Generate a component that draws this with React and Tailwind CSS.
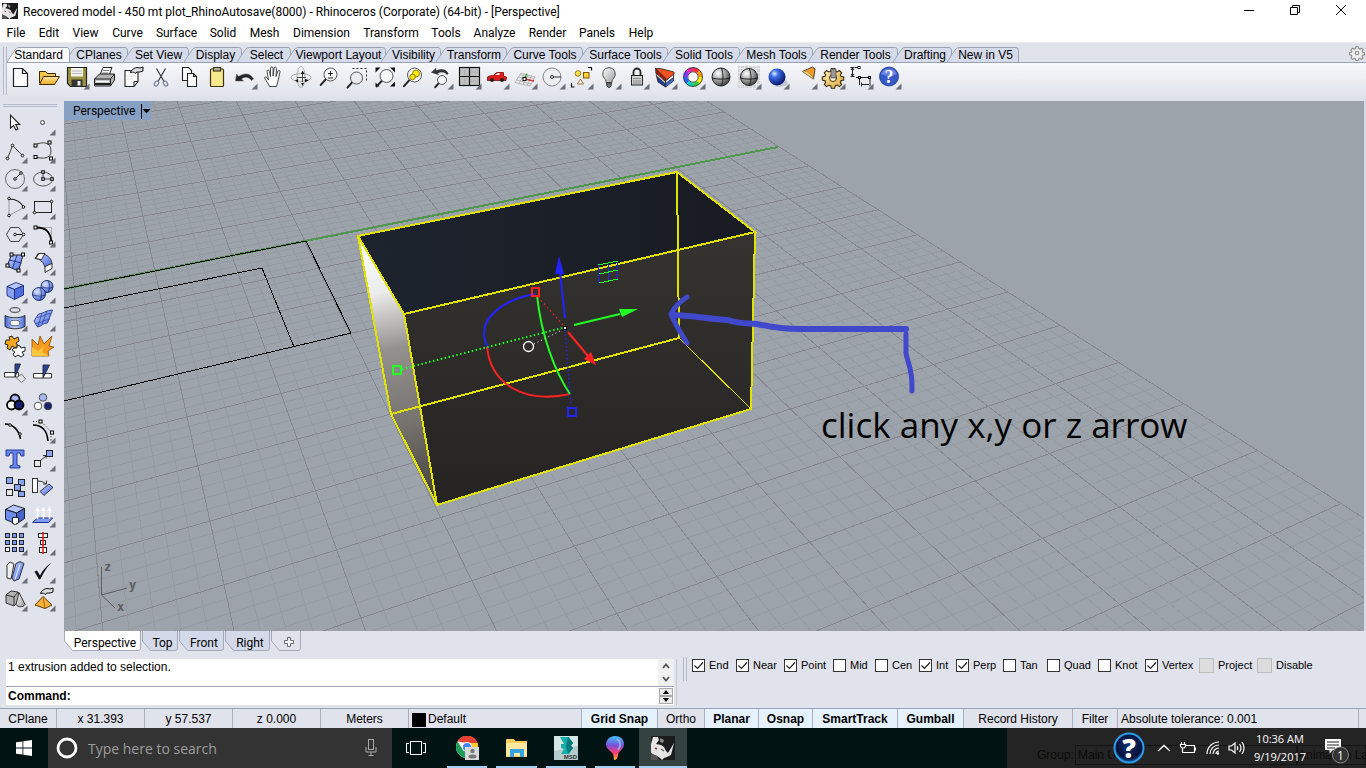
const UI = 'font-[Roboto,"Open_Sans",sans-serif]'
const HUMAN = 'font-["Open_Sans","Noto_Sans",sans-serif]'
const SANS = 'font-["Liberation_Sans",Arial,sans-serif]'

/* ---------- shared paint ---------- */
function Paints() {
  return (
    <svg className="absolute h-0 w-0" aria-hidden="true">
      <defs>
        <linearGradient id="folder" x1="0" y1="0" x2="0" y2="1"><stop offset="0" stopColor="#ffe9a0" /><stop offset="1" stopColor="#f0a81c" /></linearGradient>
        <linearGradient id="steel" x1="0" y1="0" x2="1" y2="1"><stop offset="0" stopColor="#fff" /><stop offset="1" stopColor="#9a9a9a" /></linearGradient>
        <linearGradient id="blue" x1="0" y1="0" x2="1" y2="1"><stop offset="0" stopColor="#c3d2ff" /><stop offset="1" stopColor="#4a6ae0" /></linearGradient>
        <linearGradient id="blueX" x1="0" y1="0" x2="1" y2="0"><stop offset="0" stopColor="#3e63d8" /><stop offset=".5" stopColor="#cfdcff" /><stop offset="1" stopColor="#3e63d8" /></linearGradient>
        <radialGradient id="ball" cx=".35" cy=".3" r=".75"><stop offset="0" stopColor="#fff" /><stop offset=".5" stopColor="#a5a5a5" /><stop offset="1" stopColor="#3c3c3c" /></radialGradient>
        <radialGradient id="blueBall" cx=".35" cy=".3" r=".75"><stop offset="0" stopColor="#dfe9ff" /><stop offset=".3" stopColor="#3b6be8" /><stop offset="1" stopColor="#04105f" /></radialGradient>
        <radialGradient id="softBall" cx=".35" cy=".3" r=".75"><stop offset="0" stopColor="#dce6ff" /><stop offset="1" stopColor="#4467d8" /></radialGradient>
        <linearGradient id="gold" x1="0" y1="0" x2="1" y2="1"><stop offset="0" stopColor="#fff0c0" /><stop offset="1" stopColor="#d9a63a" /></linearGradient>
        <linearGradient id="boxTop" x1="0" y1="0" x2="1" y2="0"><stop offset="0" stopColor="#1e242e" /><stop offset="1" stopColor="#181b22" /></linearGradient>
        <linearGradient id="boxFront" x1="0" y1="0" x2="0" y2="1"><stop offset="0" stopColor="#353330" /><stop offset="1" stopColor="#262422" /></linearGradient>
        <linearGradient id="boxSide" gradientUnits="userSpaceOnUse" x1="372" y1="240" x2="420" y2="500"><stop offset="0" stopColor="#fff" /><stop offset=".2" stopColor="#ececec" /><stop offset=".42" stopColor="#93918e" /><stop offset=".7" stopColor="#77736f" /><stop offset="1" stopColor="#45413d" /></linearGradient>
        <radialGradient id="helpOrb" cx=".5" cy=".4" r=".6"><stop offset="0" stopColor="#12346e" /><stop offset=".75" stopColor="#06103a" /><stop offset="1" stopColor="#1567b0" /></radialGradient>
        <linearGradient id="drop" x1="0" y1="0" x2="0" y2="1"><stop offset="0" stopColor="#3fc0ff" /><stop offset=".4" stopColor="#7b4fd6" /><stop offset=".7" stopColor="#ff3d6e" /><stop offset="1" stopColor="#ffb52e" /></linearGradient>
      </defs>
    </svg>
  )
}

const Dots = ({ pts, s = 3 }) => pts.map(([x, y], i) => (
  <rect key={i} x={x - s / 2} y={y - s / 2} width={s} height={s} fill="#fff" stroke="#000" strokeWidth="1" />
))
const Rounds = ({ pts }) => pts.map(([x, y], i) => <circle key={i} cx={x} cy={y} r="1.3" fill="#fff" stroke="#000" strokeWidth=".9" />)
const GEAR = 'M12.3 5.5h3.4l.5 2.6 1.9.8 2.3-1.4 2.3 2.3-1.4 2.2.8 1.4 2.6.5v3.2l-2.6.5-.8 1.6 1.4 2.2-2.3 2.2-2.3-1.5-1.9.8-.5 2.4h-3.4l-.5-2.4-1.9-.8-2.3 1.5-2.3-2.2 1.4-2.2-.8-1.6-2.6-.5v-3.2l2.6-.5.8-1.4-1.4-2.2 2.3-2.3 2.3 1.4 1.9-.8z'
const Lens = ({ x = 16, y = 12, r = 6, fill = '#f4f6f8' }) => (
  <g><path d={`M${x - r * 0.7} ${y + r * 0.7}L${x - r * 1.5} ${y + r * 1.6}`} stroke="#222" strokeWidth="2" strokeLinecap="round" /><circle cx={x} cy={y} r={r} fill={fill} stroke="#555" strokeWidth="1" /></g>
)
const Grip = ({ x, y }) => <path d={`M${x} ${y}c2-2 4-3.500 6-3.500l3 .5 3-1v4l-3 1-3 0-2 1.500-1.500-1.500-3 .5z`} fill="#ddd" stroke="#111" strokeWidth="1" strokeLinejoin="round" />

const TOOLS = [
  ['New', false, <path d="M6.500 5.500h9l5 5v13h-14zM15.500 5.500v5h5" fill="#fcfcfc" stroke="#222" strokeWidth="1.2" />],
  ['Open', false, <g stroke="#3a2a00" strokeLinejoin="round"><path d="M4.500 20V8.500h6l2 2h8v3" fill="#f6c64a" /><path d="M4.500 21.500l4-8h16l-5 8z" fill="url(#folder)" /></g>],
  ['Save', true, <g><path d="M4.500 4.500h19v19h-16l-3-3z" fill="#9c9340" stroke="#222" strokeWidth="1.200" /><rect x="8" y="5" width="12" height="8.500" fill="#f3f3ef" /><path d="M9 8h10M9 10.500h10" stroke="#b9b9b9" /><rect x="8.500" y="16.500" width="11" height="7" fill="#333" /><rect x="14.500" y="18" width="3" height="4.500" fill="#eee" /></g>],
  ['Print', false, <g stroke="#222" strokeLinejoin="round"><path d="M9 12l3-7.500h9l-3 8z" fill="#fff" /><path d="M12 7.500h6M11 10h6" stroke="#777" /><path d="M3.500 16l5-5h15v6l-4 6h-16z" fill="#b5b5b5" /><path d="M3.500 16h16v7M19.500 16l4-5" fill="none" /><path d="M5 18.500h13" stroke="#fff" strokeWidth="1.500" /><path d="M4 21h15" strokeWidth="2" /></g>],
  ['Document properties', false, <g><path d="M6 7.500h13v11l-4 5H6z" fill="#fcfcfc" stroke="#222" strokeWidth="1.100" /><path d="M15 23v-4.500h4" fill="none" stroke="#222" /><path d="M8 13h8M8 16h6" stroke="#ddd" /><Grip x={12} y={8} /></g>],
  ['Cut', false, <g fill="none"><path d="M9.500 5.500l7.500 13M18.500 5.500l-7.500 13" stroke="#3a3a3a" strokeWidth="1.200" /><ellipse cx="9.500" cy="20.500" rx="1.800" ry="2.800" transform="rotate(35 9.500 20.500)" stroke="#7b829c" strokeWidth="1.200" /><ellipse cx="18.500" cy="20.500" rx="1.800" ry="2.800" transform="rotate(-35 18.500 20.500)" stroke="#7b829c" strokeWidth="1.200" /></g>],
  ['Copy', false, <g fill="#fcfcfc" stroke="#222" strokeWidth="1.100"><path d="M7.500 4.500h6l3 3v10h-9z" /><path d="M12.500 10.500h6l3 3v10h-9zM18.500 10.500v3h3" /></g>],
  ['Paste', false, <g stroke="#3d3413" strokeWidth="1.200"><rect x="7.500" y="6" width="13" height="17.500" rx="1" fill="#f7e88e" /><rect x="10.500" y="4.500" width="7" height="3.500" fill="#b8b8a0" /></g>],
  ['Undo', true, <path d="M4.500 18l1-7 2 2.500c6-4 12-3.500 15 2.500l-2 1.500c-3-4-7-4-10-1.500l2 2z" fill="#222" stroke="#666" strokeWidth=".5" />],
  ['Pan', false, <path d="M10.500 23.500c-1-3-4-6-5-9 1-1.500 2.500 0 4 2.500l-1.500-9c.5-1.500 2-1.500 2.500.500l1 5V5c.500-1.500 2.300-1.500 2.600 0v8l1-8c.500-1.500 2.400-1 2.400.500l-.5 8 2-5.500c1-1.200 2.300-.500 2 1l-2 9-1.500 5.500z" fill="#fff" stroke="#333" strokeWidth=".9" />],
  ['Rotate view', false, <g fill="none"><ellipse cx="14" cy="14.500" rx="10" ry="4" stroke="#aaa" /><ellipse cx="14" cy="14" rx="4" ry="10.500" stroke="#aaa" /><path d="M15.500 10v9M10 14.500h9" stroke="#444" /><path d="M11 16l-3 1.500 3 2zM18 16l4 1-4 2.500zM14 11l1.500-3.500 2 3.500zM14 20l1.500 3 1.500-3z" fill="#111" /></g>],
  ['Zoom dynamic', false, <g><Lens x={15.500} y={11.500} r={6.500} /><path d="M13 10.500h5M15.500 8v5M13 15h5" stroke="#222" /></g>],
  ['Zoom window', false, <g><Lens x={13.500} y={15} r={6} fill="#e9ebf0" /><path d="M9.500 5.500h14v14" fill="none" stroke="#222" strokeDasharray="2 2" /></g>],
  ['Zoom extents', false, <g><path d="M4.500 4.500h5l-5 5zM24 4.500v5l-5-5zM24 23.500h-5l5-5zM4.500 23.500v-4l4 4z" fill="#111" /><Lens x={15.500} y={13} r={6.500} /></g>],
  ['Zoom selected', false, <g><Lens x={15.500} y={12} r={7} /><circle cx="17" cy="10.500" r="3.500" fill="#ffe600" stroke="#776600" strokeWidth=".8" /><circle cx="13.500" cy="14" r="2.800" fill="#ffe600" stroke="#776600" strokeWidth=".8" /></g>],
  ['Undo view change', true, <g><path d="M4 9.500l5-4.500 .5 2.500c5-2.500 10-1 12 3l-1.500 1.500c-2-3-5-3.500-9-2l1 2z" fill="#333" /><Lens x={15} y={17} r={4.500} /></g>],
  ['Four viewports', true, <g><rect x="4.500" y="4.500" width="20" height="18" fill="#c0c0c0" stroke="#111" strokeWidth="1.200" /><path d="M14.500 5v17M5 13.500h19" stroke="#111" strokeWidth="1.200" /><path d="M9.500 5v8M15 9h9M9.500 14v8M15 18h9" stroke="#b0b0b0" /></g>],
  ['Named views', true, <g><path d="M4.500 14c2-1.500 5-1.500 6-1.500l3-3h7v3.500l3 1-.5 3.500h-18.500z" fill="#e21b1b" stroke="#7a0a0a" strokeWidth=".8" /><path d="M12.500 12l2-2h2v2z" fill="#eee" /><circle cx="9" cy="17" r="2" fill="#222" /><circle cx="19" cy="17" r="2" fill="#222" /></g>],
  ['Set CPlane', true, <g fill="none" stroke="#aaa" strokeWidth=".8"><path d="M4 19.500l6-9.500 14 4-5 9zM5.500 17l14.500 4M7.500 14l14 4M9 11.500l14 4M8 20.500l5.500-9.500M12 21.500l5-9.500M16 22.500l4.500-10" /><path d="M14 16l9 2" stroke="#d33" strokeWidth="1.500" /><path d="M14 14.500l2-4" stroke="#3a3" strokeWidth="1.200" /><rect x="12" y="14.500" width="3" height="3" fill="#fff" stroke="#000" strokeWidth="1" /></g>],
  ['Object snap', true, <g fill="none" stroke="#888"><circle cx="13" cy="14" r="9" fill="#eceef2" /><path d="M13 14h9" stroke="#333" /><circle cx="13" cy="14" r="1.500" fill="#fff" stroke="#222" /></g>],
  ['Select objects', true, <g><path d="M4.500 20v4h3M21 4.500h3.500v3" fill="none" stroke="#111" strokeWidth="1.200" /><circle cx="11" cy="10.500" r="2.800" fill="#ffe14d" stroke="#9a7200" strokeWidth=".9" /><rect x="16.500" y="9.500" width="5.500" height="5.500" fill="#ffd23a" stroke="#7a5a00" /><path d="M10.500 21l3-5 3 5z" fill="#fff" stroke="#a0622d" strokeWidth=".9" /></g>],
  ['Hide objects', true, <g><path d="M14 4.500a6.500 6.500 0 0 1 4.500 11c-1 1-1.500 2-1.500 4h-6c0-2-.5-3-1.500-4a6.500 6.500 0 0 1 4.500-11z" fill="url(#steel)" stroke="#555" /><path d="M11.500 20h5l-.500 3-1.500 1.500h-1l-1.500-1.500z" fill="#777" stroke="#333" /></g>],
  ['Lock objects', true, <g stroke="#222"><path d="M10.500 13V9a3.500 3.500 0 0 1 7 0v4" fill="none" strokeWidth="1.800" /><rect x="8.500" y="12.500" width="11" height="9.500" fill="#d2d2d2" /><path d="M10 15.500h8M10 18h8M10 20h8" stroke="#888" /></g>],
  ['Layers', true, <g stroke="#222" strokeWidth=".8" strokeLinejoin="round"><path d="M5.500 13l9 7.500v3.500l-7.500-5z" fill="#1d3f9e" /><path d="M14.500 20.500l8-6v3.500l-8 6z" fill="#3c70e0" /><path d="M5 9.500l9.500 8.500v3L5.500 13z" fill="#ddd" /><path d="M14.500 18l8-7v3.500l-8 6z" fill="#fff" /><path d="M4.500 5.500l10 9.500v3.500L5 10z" fill="#b51a08" /><path d="M4.500 5.500h5l13.500 3.500v2l-8.500 6.500V15z" fill="#f5521f" /></g>],
  ['Object properties', true, <g fill="none" strokeWidth="4">{['#f33', '#f90', '#fe0', '#3c3', '#0cc', '#26f', '#83f', '#e2a'].map((c, i) => <path key={c} d="M14 6.500a7.500 7.500 0 0 1 5.500 2.300" stroke={c} transform={`rotate(${i * 45} 14 14)`} />)}<circle cx="14" cy="14" r="9.500" stroke="#333" strokeWidth=".9" /><circle cx="14" cy="14" r="5.200" fill="#fff" stroke="#444" strokeWidth=".9" /></g>],
  ['Shaded viewport', false, <g><circle cx="14" cy="14" r="9" fill="url(#ball)" stroke="#222" /><path d="M5 15c5 1.500 13 1.500 18 0M14.500 5c2 6 2 12 0 18" fill="none" stroke="#222" /></g>],
  ['Render preview', true, <g><rect x="3" y="3" width="22" height="22" fill="#d2d3d6" /><path d="M3 5.500h22M3 9.500h22M3 13.500h22M3 17.500h22M3 21.500h22M5.500 3v22M9.500 3v22M13.500 3v22M17.500 3v22M21.500 3v22" stroke="#eee" strokeWidth=".8" /><circle cx="14" cy="14" r="8.500" fill="url(#ball)" stroke="#222" /><path d="M5.500 15c5 1.500 12 1.500 17 0M14.500 6c2 6 2 11 0 16.500" fill="none" stroke="#222" /></g>],
  ['Render', true, <g><ellipse cx="17" cy="20" rx="8" ry="4" fill="#c3c7cf" /><circle cx="14" cy="14" r="8.500" fill="url(#blueBall)" /></g>],
  ['Spotlight', true, <g><path d="M11.500 8.500l10-4.500 2.500 2-1.500 10z" fill="#f59b23" stroke="#333" strokeWidth=".9" /><path d="M11.500 8.500c3-1 5 0 7 2s3.500 3.500 4 5.500z" fill="#ffd27a" stroke="#884" strokeWidth=".7" /></g>],
  ['Options', true, <g><path d={GEAR} fill="url(#gold)" stroke="#3d2c05" strokeWidth="1.100" /><circle cx="14" cy="15" r="3.500" fill="#fff6d8" stroke="#3d2c05" /><path d="M12 6h5v9h-5z" fill="#999" stroke="#444" strokeWidth=".7" /></g>],
  ['Dimensions', true, <g fill="none" stroke="#222"><path d="M5.500 5v8M3.500 4.500h4M3.500 13.500h4M8 4.500h3M9 14.500h14v5M12.500 16v6M15 21.500h7M14.500 19.500v4M23 19.500v4M5.500 5l-1.500 2M5.500 5l1.500 2M5.500 13l-1.500-2M5.500 13l1.500-2" /><Dots pts={[[12, 4.500], [12.500, 14.500], [22.500, 14.500]]} s={2} /></g>],
  ['Help', true, <g><circle cx="14" cy="13.500" r="9.500" fill="#3558c8" stroke="#1c3490" strokeWidth=".8" /><path d="M6 11a8.500 8 0 0 1 16 0c-5 2.500-11 2.500-16 0z" fill="#7d98ea" opacity=".7" /><text x="14" y="20" textAnchor="middle" fontFamily="Liberation Serif" fontWeight="700" fontSize="18" fill="#fff">?</text></g>],
]

const Curve = ({ d }) => <path d={d} fill="none" stroke="#444" strokeWidth="1" />
const SIDE = [
  ['Select', 0, <path d="M9.500 6v13l3-2.500 2.500 4.500 2-1-2.300-4.500h4z" fill="#fff" stroke="#222" strokeWidth="1.100" />],
  ['Point', 1, <circle cx="13.500" cy="13.500" r="2" fill="#fff" stroke="#444" />],
  ['Polyline', 1, <g><Curve d="M6.500 21.500l5-13 10 10" /><Rounds pts={[[6.500, 21.500], [11.500, 8.500], [21.500, 18.500]]} /></g>],
  ['Curve', 1, <g><Curve d="M6 8c8-4 16-3 16 6 0 8-8 8-16 6" /><Dots pts={[[6.500, 8.500], [20.500, 5.500], [22, 21.500], [6.500, 20]]} /></g>],
  ['Circle', 1, <g><circle cx="14" cy="14" r="9.500" fill="none" stroke="#666" /><path d="M14 14l6-6" stroke="#222" /><Rounds pts={[[14, 14], [20, 8]]} /></g>],
  ['Ellipse', 1, <g><ellipse cx="14" cy="14" rx="9.500" ry="7" fill="none" stroke="#555" /><path d="M14 7v7h9" fill="none" stroke="#222" strokeWidth=".8" /><Dots pts={[[14, 7], [14, 14], [23, 14]]} s={2.5} /></g>],
  ['Arc', 1, <g><path d="M8 5.500v17l15-8" fill="none" stroke="#999" /><path d="M8 6c7 0 12 3 15 8.500" fill="none" stroke="#111" strokeWidth="1.100" /><Rounds pts={[[8, 5.500], [8, 22.500], [22.500, 14]]} /></g>],
  ['Rectangle', 1, <g><rect x="5.500" y="8.500" width="17" height="11" fill="none" stroke="#222" /><Rounds pts={[[5.500, 19.500], [22.500, 8.500]]} /></g>],
  ['Polygon', 1, <g><path d="M9.500 6.500h8.500l4.500 7-4.500 7h-8.500L5.500 13.500z" fill="none" stroke="#444" /><path d="M14 13.500h8" stroke="#000" /><Rounds pts={[[14, 13.500], [22.500, 13.500]]} /></g>],
  ['Fillet', 1, <g><path d="M7 6.500h15.500v14" fill="none" stroke="#999" strokeWidth=".8" /><path d="M7 6.500c10 0 14.500 4 15.500 15" fill="none" stroke="#000" strokeWidth="1.800" /><Dots pts={[[6.500, 6.500], [22, 21.500]]} /></g>],
  ['Surface from points', 1, <g><path d="M10.500 6h11.500l-4.500 16-11.500-5z" fill="url(#blue)" stroke="#222" /><path d="M8.500 11l12 3M16 6l-4.500 13.500" stroke="#223a90" /><Dots pts={[[10.500, 5.500], [22, 5.500], [17.500, 21.500], [6.500, 16.500]]} /></g>],
  ['Loft', 1, <g stroke="#222" strokeWidth=".9"><path d="M9 4.500c7-1 14 4 14 11l-7 3c-1-5-5-9-10-9z" fill="url(#blue)" /><path d="M6.500 9.500l3.500-5h6l-3.500 6z" fill="#fff" /><path d="M16 17.500l7-3v5l-7 4z" fill="#fff" /></g>],
  ['Box', 1, <g stroke="#1b2b78" strokeWidth=".9" strokeLinejoin="round"><path d="M6 9.500l9-4 7.500 3-9 4z" fill="#b7c7ff" /><path d="M6 9.500l7.500 3v10l-7.500-4z" fill="#88a2f5" /><path d="M13.500 12.500l9-4v9.500l-9 4.500z" fill="#4a6cdc" /></g>],
  ['Spheres', 1, <g stroke="#15225e" strokeWidth=".9"><circle cx="18" cy="9.500" r="6" fill="url(#softBall)" /><circle cx="10" cy="17" r="6.500" fill="url(#softBall)" /><path d="M4 18c4 1.500 9 1.500 12 0M11 11c2 4 2 8 0 12M13 10c4 1.500 8 1.500 11 0M19 3.500c2 4 2 8 0 12" fill="none" strokeWidth=".7" /></g>],
  ['Surface tools', 1, <g stroke="#222" strokeWidth=".9"><ellipse cx="14" cy="5" rx="5" ry="2.300" fill="none" /><path d="M4 10.500c5 3 15 3 20 0v11c-5 3-15 3-20 0z" fill="url(#blueX)" /><ellipse cx="14" cy="18" rx="5" ry="2.800" fill="#fff" stroke="#456" /></g>],
  ['Mesh', 1, <g stroke="#223a90" strokeWidth=".9"><path d="M5 16l4.500-7c4 0 8-4 14-4l-5 13c-5 0-5 3-10 4z" fill="url(#blue)" /><path d="M6.500 18.500c5 0 8-4 14-4M8 12.500c5 0 8-4 14-4M13 8l-4 13M18 6l-5 13" fill="none" strokeWidth=".7" /></g>],
  ['Explode', 0, <g stroke="#222" strokeLinejoin="round"><path d="M5 7l4 0-1-3 3-1 2 3 4-2 1 4-3 2 2 3-3 2-3-2-2 4-3-2 1-3-3-1z" fill="#f5a623" /><path d="M13 15l3 0 0-3 3 1 1 2 4-1 0 4-3 1 2 3-3 2-3-2-3 2-2-3 2-2-3-2z" fill="#fff" /></g>],
  ['Blast', 0, <g><path d="M3 6l6 6 2-9 4 8 8-8-3 10 5 1-6 4 1 5H3z" fill="#f59a1c" stroke="#8a4b00" strokeWidth=".8" /><path d="M3 23v-9l6 4 6-5-2 6 7 4z" fill="#ffc53d" /></g>],
  ['Trim', 0, <g stroke="#222" strokeWidth=".9"><path d="M3.500 11.500h14v4.500h-14z" fill="#fff" /><path d="M14 3h5.500l-5.500 13z" fill="#24469c" /><path d="M15.500 17l5-4 4 5-4 3.500z" fill="#e4e4e4" stroke="#666" /></g>],
  ['Split', 0, <g stroke="#222" strokeWidth=".9"><path d="M4.500 12.500h18v4.500h-18z" fill="#fff" /><path d="M14 4h6.500l-6.500 13z" fill="#24469c" /></g>],
  ['Join', 1, <g stroke="#000" strokeWidth="1.800"><circle cx="14" cy="10" r="4.500" fill="#a9b6f2" /><circle cx="10.500" cy="16" r="4.500" fill="#fff" /><circle cx="18" cy="16" r="4.500" fill="#14206e" /></g>],
  ['Group', 0, <g stroke="#444" strokeWidth=".9"><circle cx="14" cy="8.500" r="3.800" fill="#a9b6f2" /><circle cx="9" cy="17" r="3.800" fill="#fff" /><circle cx="19" cy="17" r="3.800" fill="#14206e" /></g>],
  ['Edit points', 0, <g><path d="M4 7c8 0 14 6 15.500 15" fill="none" stroke="#000" strokeWidth="1.600" /><Rounds pts={[[9, 8], [19, 17]]} /></g>],
  ['Control points', 1, <g><path d="M4 8c9 0 14 5 15 16" fill="none" stroke="#000" strokeWidth="1.600" /><path d="M4 4.500h8l10 10v10" fill="none" stroke="#000" strokeDasharray="1 2" /><Dots pts={[[11.500, 4.500], [23, 15.500]]} /></g>],
  ['Text', 0, <path d="M5 5h18v6h-3l-1-3h-3v12l3 1v2H9v-2l3-1V8H9l-1 3H5z" fill="#6685ee" stroke="#1c2f8a" strokeWidth=".9" />],
  ['Move', 1, <g stroke="#222"><rect x="5.500" y="15.500" width="6" height="6" fill="#e8e8e8" /><rect x="17.500" y="5.500" width="6" height="6" fill="#8aa2f2" /><path d="M12 15l5-4M14 10.500h3v3" fill="none" strokeWidth=".9" /></g>],
  ['Copy objects', 0, <g stroke="#222"><rect x="5.500" y="4.500" width="6" height="6" fill="#8aa2f2" /><rect x="17.500" y="6.500" width="6" height="6" fill="#8aa2f2" /><rect x="13.500" y="11.500" width="6" height="6" fill="#8aa2f2" /><rect x="5.500" y="16.500" width="6" height="6" fill="#e8e8e8" /><rect x="17.500" y="18.500" width="6" height="5" fill="#8aa2f2" /></g>],
  ['Rotate', 0, <g stroke="#222" strokeWidth=".9"><rect x="3.500" y="5.500" width="5" height="14" fill="#fff" /><path d="M11 18.500l9-7.500 4 3.500-9 8z" fill="url(#blue)" /><path d="M9 8c3 0 6 1 8 3M17.500 7.500v3.500h-3.500" fill="none" /></g>],
  ['Boolean', 1, <g stroke="#111" strokeWidth=".9" strokeLinejoin="round"><path d="M4.500 8.500l8-4.500 11 3.500-8 4.500z" fill="#b7c7ff" /><path d="M4.500 8.500l11 3.500v11l-11-4.500z" fill="#6e8cee" /><path d="M15.500 12l8-4.500v10l-8 5.500z" fill="#4463d0" /><path d="M11.500 16.500h6v5l-3 2-3-1z" fill="#fff" /></g>],
  ['Extrude', 1, <g><path d="M3.500 21.500l5-4.500h15l-4 4.500z" fill="#7f9af2" stroke="#1c2f8a" /><path d="M8.500 18V8M14.500 18V8M20.500 18V8" stroke="#fff" strokeWidth="1.600" /><path d="M6 10l2.500-4 2.500 4zM12 10l2.500-4 2.500 4zM18 10l2.500-4 2.500 4z" fill="#fff" /></g>],
  ['Array', 1, <g stroke="#222">{[4.500, 11.500, 18.500].map((x) => [4.500, 11.500, 18.500].map((y) => <rect key={x + '-' + y} x={x} y={y} width="4" height="4" fill={x === 4.500 && y === 18.500 ? '#fff' : '#7f9af2'} />))}</g>],
  ['Align', 1, <g stroke="#222"><rect x="9.500" y="4.500" width="9" height="4" fill="#fff" /><rect x="11.500" y="11.500" width="5" height="4" fill="#fff" /><rect x="10.500" y="18.500" width="7" height="5" fill="#fff" /><path d="M14 3v22" stroke="#e02020" strokeWidth="1.600" /></g>],
  ['Twist', 1, <g stroke="#222" strokeWidth=".9" strokeLinejoin="round"><path d="M6 8l3-3 4 2-3 15-4-1z" fill="#eee" /><path d="M15 6.500l4-2 4 2-5 15.500-5 2-2-3z" fill="url(#blue)" /><path d="M19 7.500l-5 15" stroke="#fff" /></g>],
  ['Check', 1, <path d="M5.500 14.500l2.500-1 3 5c3-6 7-10 11.500-13-5 5-8 10-11 16.500l-1.500 .5z" fill="#111" />],
  ['Solids', 1, <g stroke="#222" strokeWidth=".9" strokeLinejoin="round"><path d="M5 10l5-4 7 1 2 8-6 6-8-3z" fill="#b2b2b2" /><path d="M5 10l8 2v9M13 12l4-5" fill="none" /><path d="M18 7.500l6 12c-2 3-7 3-9 0z" fill="url(#steel)" /></g>],
  ['Display tools', 1, <g strokeLinejoin="round"><path d="M6 20l8-8.500 9 8.500-7 3.500z" fill="#f5b040" stroke="#5c3c00" /><path d="M14 11.500l2 12" stroke="#a86a00" /><Grip x={12} y={7} /></g>],
]

function ToolCell({ label, menu, children }) {
  return (
    <button type="button" aria-label={label} title={label} className="block h-7 w-7 shrink-0">
      <svg viewBox="0 0 28 28" className="h-7 w-7" fill="none">
        {children}
        {menu ? <path d="M26.500 20.500v6h-6z" fill="#6b6f76" /> : null}
      </svg>
    </button>
  )
}

/* ---------- title, menus, toolbar ---------- */
function RhinoMark({ className }) {
  return (
    <svg viewBox="0 0 24 24" className={className}>
      <rect width="24" height="24" fill="#1b1b1b" />
      <path d="M2 1h5l1 3-3 4 5 1 3 2 2 4 2 2 6-10-3 12-4 2-3 1-2 2-2-2-3-2-5-2-3-5 2-5z" fill="#e4e4e4" />
      <path d="M9 2l4 2-1 3-3-1z" fill="#888" />
      <path d="M0 17l6 3 2 4H0z" fill="#555" />
      <path d="M4 12l2 1" stroke="#a33" strokeWidth="1.500" />
      <path d="M10 13l3 2" stroke="#555" strokeWidth="1.200" />
    </svg>
  )
}

function TitleBar() {
  return (
    <header className={`flex h-[22px] items-center bg-white text-black ${UI}`}>
      <RhinoMark className="ml-0.5 h-4 w-4" />
      <h1 className="ml-[5px] grow pt-0.5 text-[12px]">Recovered model - 450 mt plot_RhinoAutosave(8000) - Rhinoceros (Corporate) (64-bit) - [Perspective]</h1>
      <div className="mr-0.5 flex">
        {[['Minimize', 'M1 6.500h10'], ['Restore', 'M3.500 3.500v-2h7v7h-2M1.500 3.500h7v7h-7z'], ['Close', 'M1 1l10 10M11 1L1 11']].map(([l, d]) => (
          <button key={l} type="button" aria-label={l} className="flex w-[46px] justify-center pb-0.5">
            <svg viewBox="0 0 12 12" className="h-3 w-3"><path d={d} fill="none" stroke="#000" /></svg>
          </button>
        ))}
      </div>
    </header>
  )
}

const MENUS = [['File', 'w-8'], ['Edit', 'w-[34px]'], ['View', 'w-[39px]'], ['Curve', 'w-[45px]'], ['Surface', 'w-[53px]'], ['Solid', 'w-10'], ['Mesh', 'w-[43px]'], ['Dimension', 'w-[71px]'], ['Transform', 'w-[68px]'], ['Tools', 'w-[42px]'], ['Analyze', 'w-[55px]'], ['Render', 'w-[51px]'], ['Panels', 'w-12'], ['Help', 'w-10']]

function MenuBar() {
  return (
    <nav className={`flex h-[21px] items-center border-b border-[#ececec] bg-white pt-0.5 text-[12px] text-black ${UI}`}>
      {MENUS.map(([m, w]) => <button key={m} type="button" className={`${w} shrink-0 text-center whitespace-nowrap`}>{m}</button>)}
    </nav>
  )
}

const TABS = [['Standard', 63], ['CPlanes', 58], ['Set View', 61], ['Display', 53], ['Select', 49], ['Viewport Layout', 95], ['Visibility', 55], ['Transform', 66], ['Curve Tools', 76], ['Surface Tools', 85], ['Solid Tools', 72], ['Mesh Tools', 73], ['Render Tools', 85], ['Drafting', 54], ['New in V5', 67]]

function ToolbarTab({ name, width, active }) {
  const x0 = active ? 5 : 0
  return (
    <button type="button" style={{ width }} className={`relative h-[15px] shrink-0 text-[12px] leading-4 whitespace-nowrap text-black ${active ? 'z-10' : ''}`}>
      <svg width={width + 6} height="15" className="absolute top-0 -left-[5px]">
        <path d={`M${x0} 15L${x0 + 8} 3q1.500-2.500 4-2.500H${width + 2}q2.500 0 2.500 3V15`} fill={active ? '#fbfbfd' : '#d6dbea'} stroke="#9aa3b5" />
      </svg>
      <span className="relative">{name}</span>
    </button>
  )
}

function Toolbar() {
  return (
    <section className={`flex bg-[#e0e3eb] pt-1 ${SANS}`}>
      <div className="ml-[3px] h-12 w-1 shrink-0 border-x border-[#b4bccb]" />
      <div className="min-w-0 grow">
        <div className="flex">
          {TABS.map(([n, w], i) => <ToolbarTab key={n} name={n} width={w} active={i === 0} />)}
          <button type="button" aria-label="Toolbar options" className="-mt-0.5 mr-px ml-auto h-4 w-4">
            <svg viewBox="3 3 22 23" className="h-4 w-4"><path d={GEAR} fill="#eee" stroke="#888" strokeWidth="1.500" /><circle cx="14" cy="14.500" r="2.500" fill="none" stroke="#888" strokeWidth="1.500" /></svg>
          </button>
        </div>
        <div className="flex h-[39px] border-t border-[#9aa3b5] bg-linear-to-b from-[#f7f8fb] to-[#dde0e8]">
          {TOOLS.map(([l, m, g]) => <ToolCell key={l} label={l} menu={m}>{g}</ToolCell>)}
        </div>
      </div>
    </section>
  )
}

function Sidebar() {
  return (
    <aside className="w-16 shrink-0 bg-[#e0e3eb] px-[3px] pt-[3px]">
      <div className="mr-1 mb-0.5 h-[3px] border-y border-[#b4bccb]" />
      <div className="-ml-0.5 grid w-14 grid-cols-2">
        {SIDE.map(([l, m, g]) => <ToolCell key={l} label={l} menu={m}>{g}</ToolCell>)}
      </div>
    </aside>
  )
}

/* ---------- 3D viewport ---------- */
const project = (u, v) => {
  const w = 1 - 0.03877 * u - 0.02084 * v
  return [(778.5 - 0.855 * u - 65.6 * v) / w, (146.5 + 12.934 * u + 6.72 * v) / w].map((n) => n.toFixed(1)).join(' ')
}
const NEAR = 0.06
const U_MIN = -10
function gridPath(major) {
  const parts = []
  for (let i = -50; i <= 90; i++) {
    if ((i % 5 === 0) !== major) continue
    const u = i / 5
    const vEnd = Math.min(30, (1 - 0.03877 * u - NEAR) / 0.02084)
    if (vEnd > 0) parts.push(`M${project(u, 0)}L${project(u, vEnd)}`)
  }
  for (let i = 0; i <= 150; i++) {
    if ((i % 5 === 0) !== major) continue
    const v = i / 5
    const uEnd = Math.min(20, (1 - 0.02084 * v - NEAR) / 0.03877)
    if (uEnd > U_MIN) parts.push(`M${project(U_MIN, v)}L${project(uEnd, v)}`)
  }
  return parts.join('')
}
const MINOR = gridPath(false)
const MAJOR = gridPath(true)

function Scene() {
  return (
    <svg viewBox="64 101 1300 530" preserveAspectRatio="xMinYMin slice" className="absolute inset-0 h-full w-full" fill="none">
      <g shapeRendering="crispEdges">
        <path d={MINOR} stroke="#959ba2" />
        <path d={MAJOR} stroke="#86878f" />
        <path d="M64 289L778 147" stroke="#4e984b" strokeWidth="2" />
        <path d="M64 289L306 241L351 333L64 401M64 308L262 268L294 347" stroke="#000" />
        <path d="M358 236L677 172L755 232L404 314Z" fill="url(#boxTop)" />
        <path d="M404 314L755 232L751 409L437 505Z" fill="url(#boxFront)" />
        <path d="M358 236L404 314L437 505L391 414Z" fill="url(#boxSide)" />
        <path d="M358 236L677 172L755 232L404 314ZM404 314L437 505L751 409L755 232M358 236L391 414L437 505M391 414L679 338L677 172" stroke="#e2e200" strokeWidth="2" />
        <path d="M679 338L751 409" stroke="#e2e200" />
      </g>
      <g strokeWidth="2">
        <path d="M565 318L560 272" stroke="#2222ff" />
        <path d="M559 256l5 18h-9z" fill="#2222ff" />
        <path d="M574 325L620 314" stroke="#22ff22" />
        <path d="M638 309l-19 0 3 8z" fill="#22ff22" />
        <path d="M568 332L588 356" stroke="#ff2222" />
        <path d="M596 365l-12-6 7-7z" fill="#ff2222" />
        <path d="M535 294C510 298 478 315 485 340L487 347" stroke="#2222ff" />
        <path d="M487 347C491 385 525 404 570 394" stroke="#ff2222" />
        <path d="M537 295C541 335 555 372 570 394" stroke="#22ff22" />
      </g>
      <path d="M402 369L562 328" stroke="#22ff22" strokeWidth="2" strokeDasharray="1.500 2.500" />
      <path d="M538 297L563 325" stroke="#ff2222" strokeWidth="1.300" strokeDasharray="1.500 3" />
      <path d="M565 330L571 406" stroke="#2222ff" strokeWidth="1.500" strokeDasharray="1.500 2.500" />
      <path d="M534 344L562 330" stroke="#fff" strokeDasharray="1 3" />
      <g shapeRendering="crispEdges">
        <g strokeWidth="2">
          <rect x="532" y="288" width="7" height="8" stroke="#ff2222" />
          <rect x="393" y="366" width="8" height="8" stroke="#22ff22" />
          <rect x="568" y="408" width="8" height="8" stroke="#2222ff" />
        </g>
        <rect x="563" y="326" width="3" height="3" fill="#fff" stroke="#000" />
        <path d="M598.500 265v18M608.500 264v16M617.500 261v18" stroke="#2222ff" />
        <path d="M598 265L618 261M599 274L618 270M599 283L618 279" stroke="#22ff22" />
      </g>
      <circle cx="528.500" cy="346.500" r="5" stroke="#fff" strokeWidth="1.300" />
      <g stroke="#4048cc" strokeWidth="6" strokeLinecap="round" strokeLinejoin="round">
        <path d="M687 297Q676 304 671 314Q676 326 687 343" strokeWidth="5" />
        <path d="M672 315C690 315 710 319 728 320C740 324 745 323 757 324C775 328 785 329 800 329L906 329" />
        <path d="M906 334L906 353C907 362 913 368 912 391" strokeWidth="5" />
      </g>
      <text x="821" y="438" fontSize="35" fontFamily="Open Sans" fill="#000">click any x,y or z arrow</text>
      <path d="M101.500 567V595L127 588M101.500 595L115 608" stroke="#5c5d60" />
      <g fontSize="12" fontWeight="700" fontFamily="DejaVu Sans Mono" fill="#5c5d60">
        <text x="104" y="571">z</text><text x="129" y="589">y</text><text x="117" y="611">x</text>
      </g>
    </svg>
  )
}

function Viewport() {
  return (
    <main className="relative min-h-[530px] grow overflow-hidden border-r-2 border-[#d4dae5] bg-[#9da3aa]">
      <Scene />
      <button type="button" className={`absolute top-0 left-0 flex h-[19px] w-[87px] items-center bg-[#86a1c3] pt-px pl-[9px] text-[12px] text-black ${UI}`}>
        <span className="w-[68px] text-left">Perspective</span>
        <svg viewBox="0 0 10 15" className="h-[15px] w-2.5"><path d="M.5 0v15" stroke="#000" /><path d="M1.500 5h8l-4 4.500z" /></svg>
      </button>
    </main>
  )
}

const VIEWS = [['Perspective', 78], ['Top', 37], ['Front', 46], ['Right', 46]]
function ViewShape({ width, fill }) {
  return (
    <svg width={width} height="21" className="absolute inset-0" fill="none">
      <path d={`M.5 0V10L8.500 19.500H${width - 4}q2.500 0 2.500-2.500V0`} fill={fill} stroke="#a3a9b9" />
    </svg>
  )
}
function ViewTabs() {
  return (
    <div className={`flex h-[27px] text-[12px] text-black ${UI}`}>
      {VIEWS.map(([n, w], i) => (
        <button key={n} type="button" style={{ width: w }} className="relative h-[21px] shrink-0 pl-1 leading-6">
          <ViewShape width={w} fill={i === 0 ? '#fff' : '#d3d9e9'} />
          <span className="relative">{n}</span>
        </button>
      ))}
      <button type="button" aria-label="New viewport tab" className="relative h-[21px] w-[31px] pl-1">
        <ViewShape width={31} fill="#e0e3eb" />
        <svg viewBox="0 0 10 10" className="relative mx-auto h-2.5 w-2.5"><path d="M3.500.5h3v3h3v3h-3v3h-3v-3h-3v-3h3z" fill="#fff" stroke="#666a78" /></svg>
      </button>
    </div>
  )
}

/* ---------- command line and snaps ---------- */
function CommandArea() {
  return (
    <section className={`ml-1.5 h-[47px] w-[671px] shrink-0 border-r border-[#c5cad6] pr-0.5 text-[12px] text-black ${SANS}`}>
      <div className="flex h-7 border-b border-[#9aa3b5] bg-white">
        <p className="grow pl-0.5 leading-4">1 extrusion added to selection.</p>
        <div className="flex w-4 flex-col justify-between bg-[#f0f0f0] py-1">
          <button type="button" aria-label="Scroll up"><svg viewBox="0 0 8 6" className="mx-auto h-1.5 w-2"><path d="M1 5l3-3.500L7 5" fill="none" stroke="#555" strokeWidth="1.800" /></svg></button>
          <button type="button" aria-label="Scroll down"><svg viewBox="0 0 8 6" className="mx-auto h-1.5 w-2"><path d="M1 1l3 3.500L7 1" fill="none" stroke="#555" strokeWidth="1.800" /></svg></button>
        </div>
      </div>
      <div className="flex h-[18px] items-center bg-white">
        <label htmlFor="cmd" className="pl-0.5 leading-4 font-bold">Command:</label>
        <input id="cmd" type="text" className="h-4 min-w-0 grow px-1 outline-none" />
        <div className="mr-px flex w-3.5 flex-col">
          <button type="button" aria-label="Previous command" className="h-2 border border-[#aaa] bg-[#eee]"><svg viewBox="0 0 6 4" className="mx-auto h-1 w-1.5"><path d="M0 4l3-4 3 4z" /></svg></button>
          <button type="button" aria-label="Next command" className="h-2 border border-[#aaa] bg-[#eee]"><svg viewBox="0 0 6 4" className="mx-auto h-1 w-1.5"><path d="M0 0l3 4 3-4z" /></svg></button>
        </div>
      </div>
    </section>
  )
}

const SNAPS = [['End', 1, 'w-11'], ['Near', 1, 'w-12'], ['Point', 1, 'w-[49px]'], ['Mid', 0, 'w-[42px]'], ['Cen', 0, 'w-11'], ['Int', 1, 'w-[37px]'], ['Perp', 1, 'w-[47px]'], ['Tan', 0, 'w-11'], ['Quad', 0, 'w-[51px]'], ['Knot', 0, 'w-[47px]'], ['Vertex', 1, 'w-[54px]'], ['Project', 2, 'w-[58px]'], ['Disable', 2, 'w-[60px]']]

function Snaps() {
  return (
    <fieldset aria-label="Object snaps" className={`flex grow text-[11px] text-black ${SANS}`}>
      <div className="-mt-0.5 mr-[5px] ml-1.5 h-6 w-1 border-x border-[#b4bccb]" />
      {SNAPS.map(([n, s, w]) => (
        <label key={n} className={`${w} flex h-[13px] shrink-0 items-center gap-1 whitespace-nowrap`}>
          {s === 2
            ? <input type="checkbox" disabled className="h-[15px] w-[15px] shrink-0 appearance-none border border-[#bcbcbc] bg-[#dddddd]" />
            : <span className="relative h-[13px] w-[13px] shrink-0">
                <input type="checkbox" defaultChecked={s === 1} className="peer block h-[13px] w-[13px] appearance-none border border-[#333] bg-white" />
                <svg viewBox="0 0 13 13" className="pointer-events-none absolute inset-0 hidden h-[13px] w-[13px] peer-checked:block"><path d="M2.500 6.500l3 3 5.500-6" fill="none" stroke="#222" strokeWidth="1.200" /></svg>
              </span>}
          {n}
        </label>
      ))}
    </fieldset>
  )
}

const CELLS = [['CPlane', 'w-[57px]'], ['x 31.393', 'w-[88px]'], ['y 57.537', 'w-[88px]'], ['z 0.000', 'w-[88px]'], ['Meters', 'w-[88px]']]
const MODES = [['Grid Snap', 'w-[76px]', 1], ['Ortho', 'w-[47px]', 0], ['Planar', 'w-[54px]', 1], ['Osnap', 'w-[54px]', 1], ['SmartTrack', 'w-[85px]', 1], ['Gumball', 'w-[66px]', 1], ['Record History', 'w-[109px]', 0], ['Filter', 'w-[45px]', 0]]

function StatusBar() {
  return (
    <footer className={`flex h-5 border-t border-[#9aa3b5] bg-[#e0e3eb] text-[12px] leading-5 text-black ${SANS}`}>
      {CELLS.map(([t, w]) => <button key={t} type="button" className={`${w} shrink-0 border-r border-[#a8aebc] whitespace-nowrap`}>{t}</button>)}
      <button type="button" className="flex min-w-20 grow items-start gap-0.5 border-r border-[#a8aebc] pl-[3px]"><span className="mt-1 h-3.5 w-3.5 bg-black" />Default</button>
      {MODES.map(([t, w, on]) => <button key={t} type="button" className={`${w} shrink-0 border-r border-[#a8aebc] whitespace-nowrap ${on ? 'bg-[#e5f2fd] font-bold' : ''}`}>{t}</button>)}
      <span className="mr-[7px] w-[241px] shrink-0 border-r border-[#a8aebc] pl-[3px]">Absolute tolerance: 0.001</span>
    </footer>
  )
}

/* ---------- Windows taskbar ---------- */
const APPS = [
  ['Chrome', 'w-10', <g><circle cx="12" cy="11" r="11" fill="#fff" /><path d="M2.500 5.500A11 11 0 0 1 22.500 7H12z" fill="#e34133" /><path d="M12 7h10.500A11 11 0 0 1 12 22l5-8z" fill="#fcc934" /><path d="M2.500 5.500L8 14l4 2-1 6A11 11 0 0 1 2.500 5.500z" fill="#1e9e57" /><circle cx="12" cy="11" r="5" fill="#fff" /><circle cx="12" cy="11" r="4" fill="#4285f4" /><rect x="10" y="11" width="15" height="13" fill="#d9d9d9" /><circle cx="17.500" cy="15" r="2.200" fill="#777" /><ellipse cx="17.500" cy="20.500" rx="4" ry="2" fill="#777" /></g>],
  ['File Explorer', 'w-[41px]', <g><path d="M1 4q0-1 1-1h7l1.500 2H22v16H1z" fill="#f9cf5e" /><path d="M1 7h21v13H1z" fill="#ffe8a0" /><path d="M5 13h14v8h-4v-4h-6v4H5z" fill="#35a4e3" /></g>],
  ['3ds Max', 'w-10', <g><rect width="24" height="24" fill="#d5e6e6" /><path d="M0 15l24-5v14H0z" fill="#b6cccc" /><path d="M6 1h9l4 6-2 2.500 2 2.500-4 6H7l3-5-3-1V8h3z" fill="#14b0aa" /><path d="M14 1l5 6-2 2.500 2 2.500-5 6-2-8z" fill="#06797c" /><text x="23" y="23" textAnchor="end" fontSize="6" fontFamily="Liberation Sans" fontWeight="700" fill="#333">MSD</text></g>],
  ['Paint 3D', 'w-10', <g><path d="M12 0c6 0 9.500 4 9 9-.5 5-6 6-6 10 0 3-2 5-3.500 5-1 0-.5-4-1.500-6C8 15 3 13 3 8.500 3 4 7 0 12 0z" fill="url(#drop)" /><path d="M14 3c4 3 4 7 1 11" stroke="#9fd8ff" strokeWidth="2" fill="none" opacity=".6" /></g>],
]

function Taskbar() {
  return (
    <div className={`flex h-10 bg-[#011313] text-white ${HUMAN}`}>
      <button type="button" aria-label="Start" className="flex w-12 items-center justify-center">
        <svg viewBox="0 0 16 16" className="h-4 w-4" fill="#fff"><path d="M0 2.300l6.500-.9v6.100H0zM7.300 1.300L16 0v7.500H7.300zM0 8.400h6.500v6.200L0 13.700zM7.300 8.400H16V16l-8.700-1.200z" /></svg>
      </button>
      <label className="flex w-[344px] items-center bg-[#333333]">
        <svg viewBox="0 0 22 22" className="ml-2 h-[22px] w-[22px]" aria-hidden="true"><circle cx="11" cy="11" r="9" fill="none" stroke="#fff" strokeWidth="2.800" /></svg>
        <input aria-label="Type here to search" placeholder="Type here to search" className="ml-2.5 min-w-0 grow text-[14px] outline-none placeholder:text-[#9c9c9c]" />
        <svg viewBox="0 0 12 18" className="mr-[15px] h-[18px] w-3" fill="none" stroke="#aaa" aria-hidden="true"><rect x="3.500" y=".5" width="5" height="10" /><path d="M1 8v5h10V8M6 13v3.500M3.500 16.500h5" /></svg>
      </label>
      <button type="button" aria-label="Task view" className="flex w-12 items-center justify-center">
        <svg viewBox="0 0 20 16" className="h-4 w-5" fill="none" stroke="#fff"><rect x="4.500" y="1.500" width="11" height="13" /><path d="M3 3.500H.5v9H3M17 3.500h2.500v9H17" /></svg>
      </button>
      <div className="ml-[7px] flex gap-[9px]">
        {APPS.map(([n, w, g]) => (
          <button key={n} type="button" aria-label={n} className={`${w} flex h-10 items-center justify-center border-b-2 border-[#a3cff2] pt-0.5`}>
            <svg viewBox="0 0 24 24" className="h-6 w-6">{g}</svg>
          </button>
        ))}
      </div>
      <button type="button" aria-label="Rhinoceros" className="ml-1 flex h-10 w-12 items-center justify-center border-b-2 border-[#a3cff2] bg-[#354242] pt-0.5">
        <RhinoMark className="h-6 w-6" />
      </button>
      <div className="relative ml-auto flex w-[359px] items-center bg-[#242424]">
        <div className={`absolute top-[17px] left-[30px] flex items-center text-[12px] leading-[18px] text-[#0b0b0b] ${SANS}`} aria-hidden="true">
          <span className="w-[38px]">Group:</span>
          <span className="w-[222px] border border-[#151515] pl-0.5">Main UI</span>
          <span className="w-[69px] overflow-hidden border border-[#151515] whitespace-nowrap">Animation La</span>
        </div>
        <button type="button" aria-label="Help" className="relative ml-[106px] h-8 w-8">
          <svg viewBox="0 0 32 32" className="h-8 w-8"><circle cx="16" cy="16" r="14.500" fill="url(#helpOrb)" stroke="#2b9be8" strokeWidth="2" /><text x="16" y="26" textAnchor="middle" fontFamily="Open Sans" fontWeight="800" fontSize="27" fill="#fff">?</text></svg>
        </button>
        <div className="relative ml-3 flex items-center gap-2">
          <svg viewBox="0 0 14 8" className="h-2 w-3.5" fill="none" stroke="#fff" strokeWidth="1.300"><path d="M1 7l6-5.500L13 7" /></svg>
          <svg viewBox="0 0 17 14" className="h-3.5 w-[17px]" fill="none" stroke="#fff"><path d="M6.500 4.500h9v7h-9M16.500 6.500v3M3.500 7v4.500h3M1.500 3.500h5v2l-1.500 1.500h-2l-1.500-1.500zM2.500 1v2M5.500 1v2" strokeWidth="1.200" /></svg>
          <svg viewBox="0 0 14 14" className="ml-0.5 h-3.5 w-3.5" fill="none" stroke="#fff" strokeWidth="1.200"><path d="M1 13A12 12 0 0 1 13 1M4 13a9 9 0 0 1 9-9M7 13a6 6 0 0 1 6-6M10 13a3 3 0 0 1 3-3" /><circle cx="12" cy="12.500" r="1.200" fill="#fff" stroke="none" /></svg>
          <svg viewBox="0 0 17 14" className="h-3.5 w-[17px]" fill="none" stroke="#fff" strokeWidth="1.200"><path d="M1 5h2.500L7 2v10L3.500 9H1zM9 5q1.500 2 0 4M11.500 3q3 4 0 8M14 1q4 6 0 12" /></svg>
        </div>
        <div className="relative ml-2 w-[54px] text-center text-[11px] leading-[18px]"><div>10:36 AM</div><div>9/19/2017</div></div>
        <button type="button" aria-label="Notifications, 1 new" className="relative ml-4 h-8 w-7">
          <svg viewBox="0 0 28 32" className="h-8 w-7"><path d="M2 7h16v11h-8l-3.500 3.500V18H2z" fill="#fff" /><path d="M4 10h12M4 13h12M4 16h8" stroke="#222" /><circle cx="17.500" cy="23" r="8" fill="#333" stroke="#888" /><text x="17.500" y="27.500" textAnchor="middle" fontSize="12" fontFamily="Open Sans" fill="#fff">1</text></svg>
        </button>
      </div>
    </div>
  )
}

export default function App() {
  return (
    <div className="flex min-h-screen flex-col overflow-x-hidden bg-[#e0e3eb]">
      <Paints />
      <TitleBar />
      <MenuBar />
      <Toolbar />
      <div className="flex grow">
        <Sidebar />
        <div className="flex min-w-0 grow flex-col">
          <Viewport />
          <ViewTabs />
        </div>
      </div>
      <div className="flex h-[50px] pt-px">
        <CommandArea />
        <Snaps />
      </div>
      <StatusBar />
      <Taskbar />
    </div>
  )
}
